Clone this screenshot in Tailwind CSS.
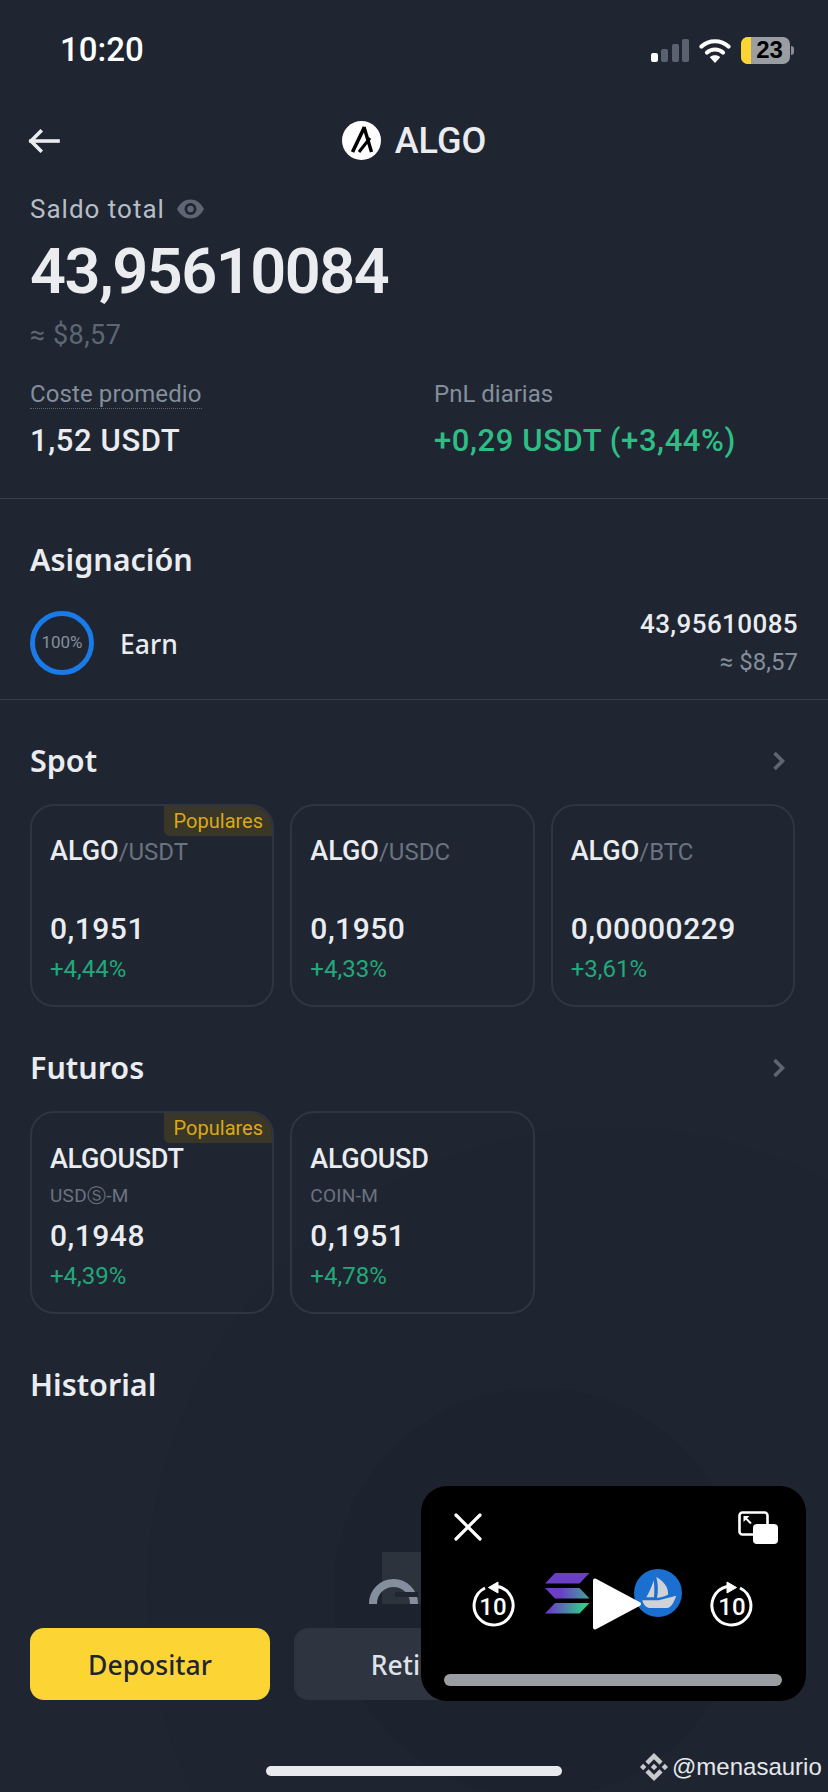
<!doctype html>
<html>
<head>
  <meta charset="UTF-8">
  <meta name="viewport" content="width=device-width, initial-scale=1.0">
  <title>ALGO</title>
  <script src="https://cdn.jsdelivr.net/npm/@tailwindcss/browser@4"></script>
</head>
<body class="bg-[#1f2631]">
<div class="relative w-[828px] h-[1792px] overflow-hidden bg-[#1f2631] font-['Roboto',sans-serif] text-[#eaecef]">

  <!-- Background rings behind the floating player -->
  <div class="absolute left-[147px] top-[1127px] w-[932px] h-[932px] rounded-full bg-[#1e2530]"></div>
  <div class="absolute left-[333px] top-[1388px] w-[410px] h-[410px] rounded-full bg-[#1d232e]"></div>

  <div class="relative">
    <!-- Status bar -->
    <div class="h-[100px] flex items-center justify-between pl-[60px] pr-[34px]">
      <span class="text-[33px] font-medium text-white">10:20</span>
      <div class="flex items-center">
        <div class="flex items-end gap-[3.5px] h-[23px]">
          <div class="w-[7px] h-[9px] rounded-[2px] bg-white"></div>
          <div class="w-[7px] h-[13px] rounded-[2px] bg-[#5a6270]"></div>
          <div class="w-[7px] h-[18px] rounded-[2px] bg-[#5a6270]"></div>
          <div class="w-[7px] h-[23px] rounded-[2px] bg-[#5a6270]"></div>
        </div>
        <svg class="ml-[10px]" width="32" height="25" viewBox="0 0 32 25" fill="none" stroke="white" stroke-width="4.2" stroke-linecap="round">
          <path d="M2.5 8.5C10 1.5 22 1.5 29.5 8.5"/>
          <path d="M8 14.5C12.5 10.5 19.5 10.5 24 14.5"/>
          <path d="M16 25L10.8 19.2C13.5 16.6 18.5 16.6 21.2 19.2Z" fill="white" stroke="none"/>
        </svg>
        <div class="relative ml-[10px] w-[49px] h-[27px] rounded-[7px] bg-[#9a9ea3] overflow-hidden flex items-center justify-center pl-[8px]">
          <div class="absolute left-0 top-0 bottom-0 w-[10px] bg-[#fcd535]"></div>
          <span class="relative text-[24px] font-bold text-black leading-none font-['Liberation_Sans',sans-serif]">23</span>
        </div>
        <div class="ml-[1px] w-[3px] h-[9px] rounded-r-full bg-[#8a8e94]"></div>
      </div>
    </div>

    <!-- Header -->
    <div class="relative h-[80px] flex items-center justify-center">
      <svg class="absolute left-[28px] top-[29px]" width="32" height="24" viewBox="0 0 32 24" fill="none" stroke="#eaecef" stroke-width="3.6" stroke-linecap="square">
        <path d="M3 12H30"/>
        <path d="M12.5 2.5L3 12L12.5 21.5"/>
      </svg>
      <div class="flex items-center gap-[14px]">
        <svg width="39" height="39" viewBox="0 0 39 39" fill="none" stroke="black">
          <circle cx="19.5" cy="19.5" r="19.5" fill="white" stroke="none"/>
          <path d="M22.5 6L10.5 31" stroke-width="3.6"/>
          <path d="M22 6L29.5 31" stroke-width="3.4"/>
          <path d="M28 17L17 31" stroke-width="3"/>
        </svg>
        <span class="mt-[2px] text-[36px] font-medium leading-none">ALGO</span>
      </div>
    </div>

    <!-- Balance -->
    <div class="px-[30px]">
      <div class="h-[58px] flex items-center gap-[11px]">
        <span class="text-[26px] tracking-[1px] text-[#b7bdc6]">Saldo total</span>
        <svg width="29" height="22" viewBox="0 0 29 22" fill="none">
          <path d="M1 11C4.5 4.5 9 1.5 14.5 1.5S24.5 4.5 28 11C24.5 17.5 20 20.5 14.5 20.5S4.5 17.5 1 11Z" fill="#5e6673"/>
          <circle cx="14.5" cy="11" r="6" fill="#1f2631"/>
          <circle cx="14.5" cy="11" r="3.2" fill="#5e6673"/>
        </svg>
      </div>
      <div class="h-[64px] flex items-center pt-[2px] text-[63px] font-semibold tracking-[-1.5px] leading-none text-[#eaecef]">43,95610084</div>
      <div class="h-[62px] flex items-center pt-[4px] text-[27px] tracking-[0.5px] text-[#5e6673]">≈ $8,57</div>
      <div class="flex">
        <div class="w-[404px]">
          <div class="h-[58px] flex items-center pt-[2px]">
            <span class="text-[24px] tracking-[0.1px] leading-[28px] text-[#848e9c] border-b border-dotted border-[#5e6673]">Coste promedio</span>
          </div>
          <div class="h-[38px] flex items-center text-[31px] font-medium tracking-[0.6px]">1,52 USDT</div>
        </div>
        <div>
          <div class="h-[58px] flex items-center pt-[2px] text-[24px] text-[#848e9c]">PnL diarias</div>
          <div class="h-[38px] flex items-center text-[31px] font-medium tracking-[0.6px] text-[#2ebd85]">+0,29 USDT (+3,44%)</div>
        </div>
      </div>
    </div>
    <div class="mt-[38px] h-[1px] bg-[#383f4b]"></div>

    <!-- Allocation -->
    <div class="px-[30px]">
      <div class="mt-[32px] h-[58px] flex items-center pb-[2px] text-[30.5px] font-semibold font-['Noto_Sans',sans-serif] leading-none">Asignación</div>
      <div class="mt-[22px] h-[64px] flex items-center justify-between">
        <div class="flex items-center gap-[26px]">
          <div class="w-[64px] h-[64px] rounded-full border-[5px] border-[#1a7ae8] flex items-center justify-center text-[17px] text-[#848e9c]">100%</div>
          <span class="mt-[4px] text-[26.5px] font-medium font-['Noto_Sans',sans-serif]">Earn</span>
        </div>
        <div class="text-right">
          <div class="h-[38px] flex items-center justify-end text-[26px] font-medium tracking-[0.4px]">43,95610085</div>
          <div class="h-[38px] flex items-center justify-end text-[24px] text-[#848e9c]">≈ $8,57</div>
        </div>
      </div>
    </div>
    <div class="mt-[24px] h-[1px] bg-[#383f4b]"></div>

    <!-- Spot -->
    <div class="px-[30px]">
      <div class="mt-[32px] h-[58px] flex items-center justify-between">
        <span class="pb-[2px] text-[30.5px] font-semibold font-['Noto_Sans',sans-serif] leading-none">Spot</span>
        <svg class="mr-[12px]" width="14" height="20" viewBox="0 0 14 20" fill="none" stroke="#5e6673" stroke-width="3.6"><path d="M2.5 2L10.5 10L2.5 18"/></svg>
      </div>
      <div class="mt-[14px] grid grid-cols-3 gap-[16px] w-[765px]">
        <div class="relative h-[203px] rounded-[24px] border-2 border-[#2f3642] px-[18px] pt-[26px]">
          <div class="absolute top-0 right-0 w-[108px] h-[30px] rounded-bl-[6px] rounded-tr-[22px] bg-[#3a3729] flex items-center justify-center text-[20px] text-[#d9a916]">Populares</div>
          <div class="h-[40px] flex items-center pb-[2px] text-[27px] font-medium">ALGO<span class="mt-[1px] text-[24px] font-normal text-[#6b7280]">/USDT</span></div>
          <div class="h-[34px]"></div>
          <div class="h-[44px] flex items-center text-[30px] font-medium tracking-[0.5px]">0,1951</div>
          <div class="h-[38px] flex items-center text-[24px] text-[#22a87a]">+4,44%</div>
        </div>
        <div class="h-[203px] rounded-[24px] border-2 border-[#2f3642] px-[18px] pt-[26px]">
          <div class="h-[40px] flex items-center pb-[2px] text-[27px] font-medium">ALGO<span class="mt-[1px] text-[24px] font-normal text-[#6b7280]">/USDC</span></div>
          <div class="h-[34px]"></div>
          <div class="h-[44px] flex items-center text-[30px] font-medium tracking-[0.5px]">0,1950</div>
          <div class="h-[38px] flex items-center text-[24px] text-[#22a87a]">+4,33%</div>
        </div>
        <div class="h-[203px] rounded-[24px] border-2 border-[#2f3642] px-[18px] pt-[26px]">
          <div class="h-[40px] flex items-center pb-[2px] text-[27px] font-medium">ALGO<span class="mt-[1px] text-[24px] font-normal text-[#6b7280]">/BTC</span></div>
          <div class="h-[34px]"></div>
          <div class="h-[44px] flex items-center text-[30px] font-medium tracking-[0.5px]">0,00000229</div>
          <div class="h-[38px] flex items-center text-[24px] text-[#22a87a]">+3,61%</div>
        </div>
      </div>

      <!-- Futures -->
      <div class="mt-[32px] h-[58px] flex items-center justify-between">
        <span class="pb-[2px] text-[30.5px] font-semibold font-['Noto_Sans',sans-serif] leading-none">Futuros</span>
        <svg class="mr-[12px]" width="14" height="20" viewBox="0 0 14 20" fill="none" stroke="#5e6673" stroke-width="3.6"><path d="M2.5 2L10.5 10L2.5 18"/></svg>
      </div>
      <div class="mt-[14px] grid grid-cols-3 gap-[16px] w-[765px]">
        <div class="relative h-[203px] rounded-[24px] border-2 border-[#2f3642] px-[18px] pt-[26px]">
          <div class="absolute top-0 right-0 w-[108px] h-[30px] rounded-bl-[6px] rounded-tr-[22px] bg-[#3a3729] flex items-center justify-center text-[20px] text-[#d9a916]">Populares</div>
          <div class="h-[40px] flex items-center text-[27px] font-medium tracking-[-0.3px]">ALGOUSDT</div>
          <div class="h-[34px] flex items-center text-[19px] tracking-[0.3px] text-[#6b7280]">USDⓈ-M</div>
          <div class="h-[44px] flex items-center text-[30px] font-medium tracking-[0.5px]">0,1948</div>
          <div class="h-[38px] flex items-center text-[24px] text-[#22a87a]">+4,39%</div>
        </div>
        <div class="h-[203px] rounded-[24px] border-2 border-[#2f3642] px-[18px] pt-[26px]">
          <div class="h-[40px] flex items-center text-[27px] font-medium tracking-[-0.3px]">ALGOUSD</div>
          <div class="h-[34px] flex items-center text-[19px] tracking-[0.3px] text-[#6b7280]">COIN-M</div>
          <div class="h-[44px] flex items-center text-[30px] font-medium tracking-[0.5px]">0,1951</div>
          <div class="h-[38px] flex items-center text-[24px] text-[#22a87a]">+4,78%</div>
        </div>
      </div>

      <!-- History -->
      <div class="mt-[42px] h-[58px] flex items-center pb-[2px] text-[30.5px] font-semibold font-['Noto_Sans',sans-serif] leading-none">Historial</div>

      <!-- Actions -->
      <div class="mt-[214px] flex gap-[24px] font-['Noto_Sans',sans-serif] text-[26.5px] font-medium">
        <div class="w-[240px] h-[72px] rounded-[14px] bg-[#fcd535] text-[#1e2530] flex items-center justify-center pt-[3px]">Depositar</div>
        <div class="w-[240px] h-[72px] rounded-[14px] bg-[#2e3440] text-[#dfe2e6] flex items-center justify-center pt-[3px]">Retirar</div>
      </div>
    </div>
  </div>

  <!-- Loading placeholder, cut off at its lower edge -->
  <div class="absolute left-[369px] top-[1552px] w-[52px] h-[52px] overflow-hidden">
    <div class="absolute left-[13px] top-0 w-[39px] h-[52px] bg-[#2d333d]"></div>
    <div class="absolute left-0 top-[27px] w-[49px] h-[49px] rounded-full border-[8px] border-[#848e9c]"></div>
    <div class="absolute left-[26px] top-[40px] w-[23px] h-[5px] bg-[#1f2631]"></div>
  </div>

  <!-- Floating video player -->
  <div class="absolute left-[421px] top-[1486px] w-[385px] h-[215px] rounded-[26px] bg-black">
    <svg class="absolute left-[33px] top-[27px]" width="28" height="28" viewBox="0 0 28 28" fill="none" stroke="white" stroke-width="3.2" stroke-linecap="round">
      <path d="M2 2L26 26"/><path d="M26 2L2 26"/>
    </svg>
    <svg class="absolute left-[317px] top-[25px]" width="40" height="33" viewBox="0 0 40 33" fill="none">
      <rect x="1.5" y="1.5" width="28" height="22" rx="3" stroke="white" stroke-width="2.6"/>
      <rect x="15" y="13" width="25" height="20" rx="4" fill="white"/>
      <path d="M6.5 6L13 12.5" stroke="white" stroke-width="2"/>
      <path d="M5.5 11V5H11.5Z" fill="white"/>
    </svg>

    <svg class="absolute left-[50px] top-[93px]" width="44" height="48" viewBox="0 0 44 48" fill="none">
      <path d="M14 9A19.5 19.5 0 1 0 27 7.5" stroke="white" stroke-width="3"/>
      <path d="M27 3V14L17.5 8.5Z" fill="white" stroke="white" stroke-width="1" stroke-linejoin="round"/>
      <text x="22" y="36" text-anchor="middle" font-family="Roboto" font-size="24" font-weight="500" fill="white">10</text>
    </svg>
    <svg class="absolute left-[289px] top-[93px]" width="44" height="48" viewBox="0 0 44 48" fill="none">
      <path d="M30 9A19.5 19.5 0 1 1 17 7.5" stroke="white" stroke-width="3"/>
      <path d="M17 3V14L26.5 8.5Z" fill="white" stroke="white" stroke-width="1" stroke-linejoin="round"/>
      <text x="22" y="36" text-anchor="middle" font-family="Roboto" font-size="24" font-weight="500" fill="white">10</text>
    </svg>

    <!-- Solana mark -->
    <svg class="absolute left-[124px] top-[87px]" width="45" height="41" viewBox="0 0 45 41">
      <defs>
        <linearGradient id="sol-mid" x1="0" y1="0" x2="1" y2="0">
          <stop offset="0.35" stop-color="#6a3fc6"/><stop offset="1" stop-color="#3fa79a"/>
        </linearGradient>
        <linearGradient id="sol-low" x1="0" y1="0" x2="1" y2="0">
          <stop offset="0.1" stop-color="#6a3fc6"/><stop offset="0.85" stop-color="#2fc98a"/>
        </linearGradient>
      </defs>
      <path d="M10 0H44.5L34.5 10.5H0Z" fill="#6a3fc6"/>
      <path d="M0 15H34.5L44.5 25.5H10Z" fill="url(#sol-mid)"/>
      <path d="M10 30H44.5L34.5 40.5H0Z" fill="url(#sol-low)"/>
    </svg>
    <!-- OpenSea mark -->
    <svg class="absolute left-[213px] top-[83px]" width="48" height="48" viewBox="0 0 48 48">
      <circle cx="24" cy="24" r="24" fill="#1a6fd0"/>
      <path d="M22.3 8C29 12 35 18 34 25.7C30 27.5 26 28.5 23 29C24.5 22 24 14 22.3 8Z" fill="#cfd2d6"/>
      <path d="M19.7 11.3C20.5 17 20.5 23 20 28.3H12.3C15 24 18 17 19.7 11.3Z" fill="#cfd2d6"/>
      <path d="M8.3 31.3H24.7L42.3 26.7C40 33 37 39 33 39H15.7C12 39 9 35 8.3 31.3Z" fill="#cfd2d6"/>
    </svg>
    <!-- Play -->
    <svg class="absolute left-[171px] top-[91px]" width="50" height="54" viewBox="0 0 50 54">
      <path d="M3 3.5V50.5L47 27Z" fill="white" stroke="white" stroke-width="4" stroke-linejoin="round"/>
    </svg>

    <div class="absolute left-[23px] top-[188px] w-[338px] h-[12px] rounded-full bg-[#9a9ea3]"></div>
  </div>

  <!-- Home indicator -->
  <div class="absolute left-[266px] top-[1766px] w-[296px] h-[10px] rounded-full bg-[#e8eaed]"></div>

  <!-- Watermark -->
  <div class="absolute left-[640px] top-[1753px] flex items-center gap-[4px]">
    <svg width="28" height="28" viewBox="0 0 126.61 126.61" fill="#c8cacd">
      <path d="M38.73 53.2l24.59-24.58 24.6 24.6 14.3-14.31L63.32 0 24.43 38.89z"/>
      <path d="M0 63.31l14.3-14.31 14.31 14.31-14.31 14.3z"/>
      <path d="M38.73 73.41L63.32 98l24.6-24.6 14.31 14.29-38.9 38.91-38.91-38.88-.01-.01z"/>
      <path d="M98 63.31l14.3-14.31 14.31 14.31-14.31 14.3z"/>
      <path d="M77.83 63.3L63.32 48.78 52.59 59.51l-1.24 1.23-2.54 2.54 14.51 14.5 14.51-14.47z"/>
    </svg>
    <span class="text-[24px] leading-[28px] text-[#e5e7eb] font-['Liberation_Sans',sans-serif]">@menasaurio</span>
  </div>
</div>
</body>
</html>
